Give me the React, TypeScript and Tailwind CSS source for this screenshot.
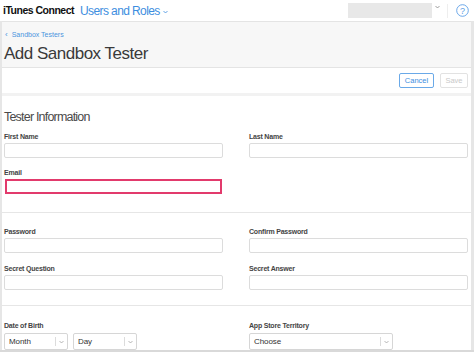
import React from 'react';

function Label({ children }: { children: React.ReactNode }) {
  return <div className="h-[10px] text-[7px] font-bold text-[#444] leading-[10px] tracking-[-0.2px]">{children}</div>;
}

function Field({ label, className = '' }: { label: string; className?: string }) {
  return (
    <div className="w-[219px]">
      <Label>{label}</Label>
      <div className={`mt-px h-[15px] bg-white border border-[#dcdcdc] rounded-[2px] ${className}`} />
    </div>
  );
}

function Select({ label, width }: { label: string; width: string }) {
  return (
    <div className={`${width} h-[17px] flex items-center border border-[#d6d6d6] rounded-[2px] bg-white`}>
      <span className="flex-1 pl-[4px] text-[8px] tracking-[-0.1px] text-[#333]">{label}</span>
      <span className="w-px h-[9px] bg-[#dcdcdc]" />
      <svg className="mx-[3px]" width="5" height="4" viewBox="0 0 5 4">
        <path d="M0.5 1 L2.5 3 L4.5 1" fill="none" stroke="#999" strokeWidth="0.7" />
      </svg>
    </div>
  );
}

export default function App() {
  return (
    <div className="w-[474px] h-[352px] overflow-hidden bg-white font-['Liberation_Sans',Arial,sans-serif] relative">
      {/* top nav */}
      <div className="h-[21px] flex items-center pl-[3px] pr-[5px] bg-white">
        <span className="text-[10.5px] font-bold text-[#111] tracking-[-0.5px]">iTunes Connect</span>
        <span className="ml-[6px] text-[12px] text-[#3d8ee0] tracking-[-0.6px]">Users and Roles</span>
        <svg className="ml-[3px] mt-[2px]" width="5" height="4" viewBox="0 0 5 4">
          <path d="M0.5 1 L2.5 3 L4.5 1" fill="none" stroke="#3d8ee0" strokeWidth="0.8" />
        </svg>
        <div className="ml-auto w-[84px] h-[15px] bg-[#e8e8e8]" />
        <svg className="ml-[3px] -mt-[8px]" width="5" height="4" viewBox="0 0 5 4">
          <path d="M0.5 1 L2.5 3 L4.5 1" fill="none" stroke="#777" strokeWidth="0.7" />
        </svg>
        <span className="ml-[7px] w-px h-[14px] bg-[#eee]" />
        <svg className="ml-[8px]" width="13" height="13" viewBox="0 0 13 13">
          <circle cx="6.5" cy="6.5" r="5.8" fill="none" stroke="#5b9ee6" strokeWidth="0.9" />
          <text x="6.5" y="9.6" textAnchor="middle" fontSize="9" fill="#5b9ee6" fontFamily="Liberation Sans">?</text>
        </svg>
      </div>

      <div className="border-l-2 border-r-[3px] border-[#e6e6e6]">
        {/* header band */}
        <div className="h-[46px] bg-[#f7f7f7] border-t border-[#e4e4e4] pl-[2px] pt-[8px]">
          <div className="flex items-center text-[7px] text-[#4a95de] leading-[9px]">
            <span className="ml-px mr-[4px] text-[8px]">‹</span>
            <span>Sandbox Testers</span>
          </div>
          <div className="mt-[5px] text-[17px] leading-[20px] text-[#3a3a3a] tracking-[-0.5px]">Add Sandbox Tester</div>
        </div>

        {/* actions */}
        <div className="h-[26px] border-t border-[#e4e4e4] flex items-center justify-end gap-[6px] pr-[3px]">
          <div className="h-[15px] w-[35px] border border-[#6aa9e8] rounded-[2px] text-[7.5px] text-[#3d8ee0] flex items-center justify-center">Cancel</div>
          <div className="h-[15px] w-[28px] border border-[#e2e2e2] rounded-[2px] text-[7.5px] text-[#c9c9c9] flex items-center justify-center">Save</div>
        </div>
        <div className="h-[3px] bg-[#f2f2f2]" />

        {/* tester info */}
        <div className="pl-[2px] pr-[3px] pt-[14px] pb-[18px]">
          <div className="text-[12.5px] leading-[14px] text-[#4a4a4a] tracking-[-0.8px]">Tester Information</div>
          <div className="mt-[8px] flex gap-[26px]">
            <Field label="First Name" />
            <Field label="Last Name" />
          </div>
          <div className="mt-[10px] flex gap-[26px]">
            <Field label="Email" className="border-2 border-[#e23a6c] rounded-none h-[14px] ml-px !w-[217px]" />
          </div>
        </div>

        <div className="h-px bg-[#e6e6e6]" />

        <div className="pl-[2px] pr-[3px] pt-[14px] pb-[15px]">
          <div className="flex gap-[26px]">
            <Field label="Password" />
            <Field label="Confirm Password" />
          </div>
          <div className="mt-[11px] flex gap-[26px]">
            <Field label="Secret Question" />
            <Field label="Secret Answer" />
          </div>
        </div>

        <div className="h-px bg-[#e6e6e6]" />

        <div className="pl-[2px] pr-[3px] pt-[15px]">
          <div className="flex gap-[26px]">
            <div className="w-[219px]">
              <Label>Date of Birth</Label>
              <div className="mt-[2px] flex gap-[5px]">
                <Select label="Month" width="w-[64px]" />
                <Select label="Day" width="w-[64px]" />
              </div>
            </div>
            <div className="w-[219px]">
              <Label>App Store Territory</Label>
              <div className="mt-[2px]">
                <Select label="Choose" width="w-[144px]" />
              </div>
            </div>
          </div>
        </div>
      </div>
      <div className="absolute left-0 right-0 bottom-0 h-[2px] bg-[#d9d9d9]" />
    </div>
  );
}
